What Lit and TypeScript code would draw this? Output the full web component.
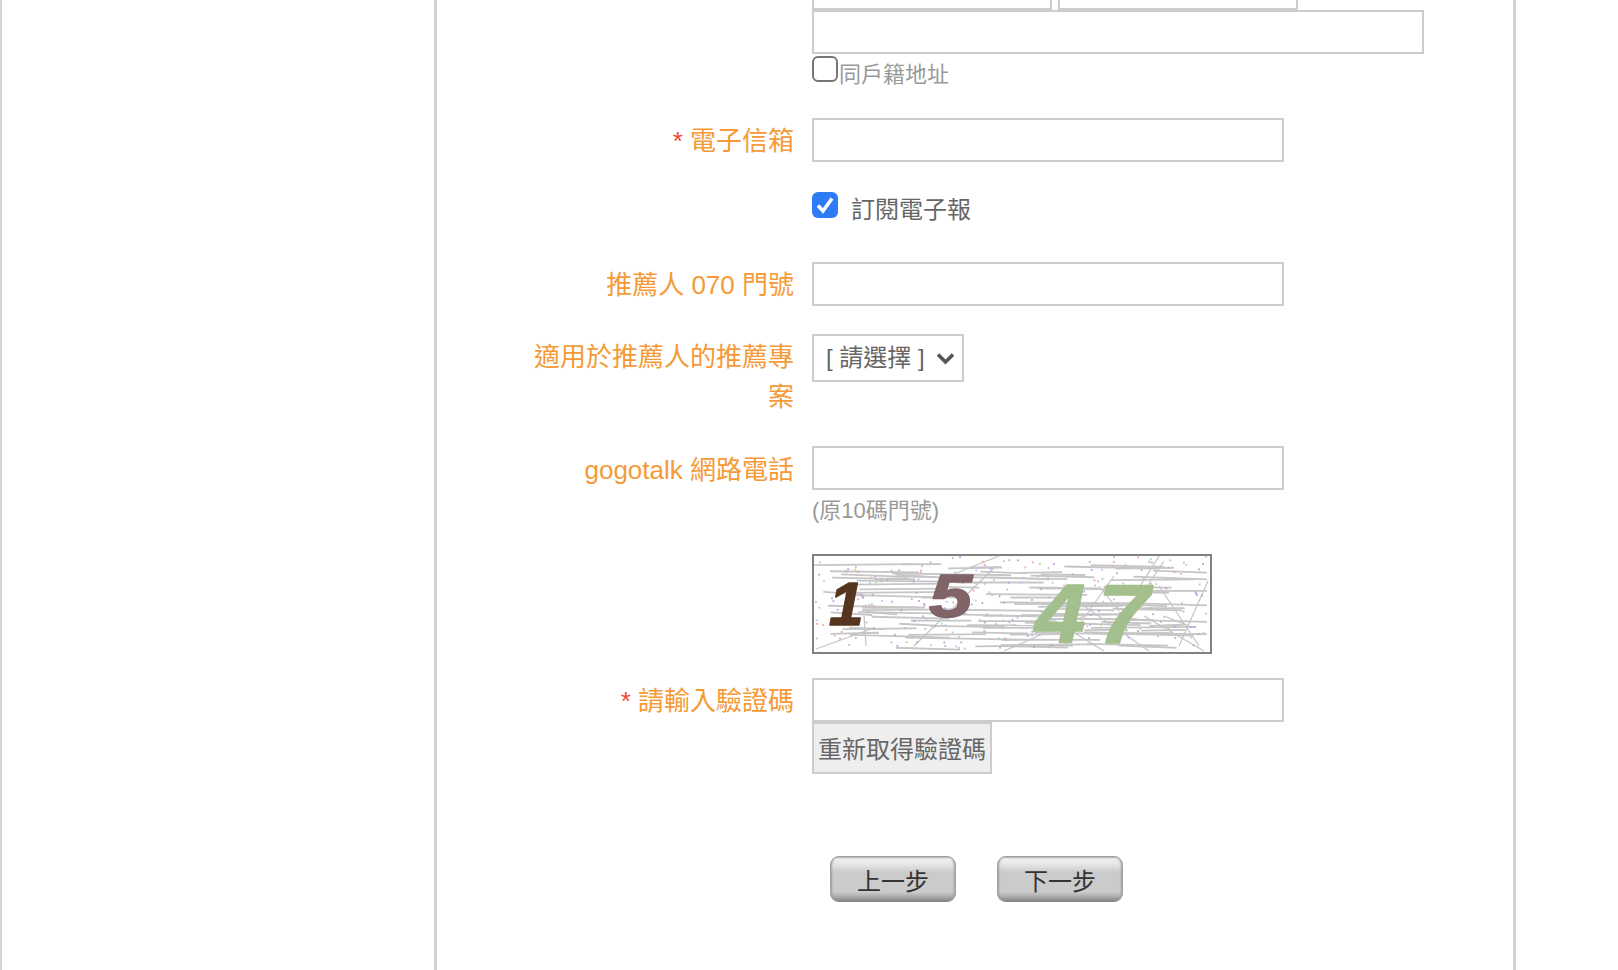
import { LitElement, html, css, svg } from "lit";
import { customElement } from "lit/decorators.js";

function rng(seed: number) {
  let s = seed;
  return () => {
    s = (s * 1664525 + 1013904223) % 4294967296;
    return s / 4294967296;
  };
}

const diagonals: number[][] = [
  [2, 93, 60, 72], [50, 60, 52, 90], [100, 90, 182, 10], [140, 18, 185, 0], [190, 95, 270, 60],
  [270, 50, 335, 95], [285, 30, 305, 55], [300, 20, 250, 90], [345, 30, 385, 90], [365, 90, 394, 25],
  [320, 40, 345, 0], [330, 60, 390, 95], [375, 70, 350, 60], [310, 65, 350, 5], [225, 55, 290, 95],
];

@customElement("app-root")
export class AppRoot extends LitElement {
  static styles = css`
    :host {
      display: block;
      width: 1618px;
      height: 970px;
      overflow: hidden;
      background: #fff;
      font-family: "Liberation Sans", "Noto Sans CJK TC", sans-serif;
    }
    .page { display: flex; height: 970px; }
    .side { width: 432px; flex: none; border-left: 2px solid #d6d6d6; }
    .main {
      width: 1082px;
      flex: none;
      box-sizing: border-box;
      border-left: 3px solid #d2d2d2;
      border-right: 3px solid #d2d2d2;
      padding-left: 83px;
    }
    .row { display: grid; grid-template-columns: 274px 1fr; column-gap: 18px; }
    .m-email { margin-top: 28px; }
    .m-news { margin-top: 28px; }
    .m-ref { margin-top: 37px; }
    .m-sel { margin-top: 28px; }
    .m-gogo { margin-top: 29px; }
    .m-cap { margin-top: 28px; }
    .m-verify { margin-top: 24px; }
    .label {
      text-align: right;
      font-size: 26px;
      line-height: 40px;
      color: #f59a36;
      padding-top: 3px;
    }
    .label.gogo { padding-top: 4px; }
    .req { color: #f0492b; }
    .field { display: flex; flex-direction: column; align-items: flex-start; }
    .clip { display: flex; gap: 6px; height: 10px; overflow: hidden; align-items: flex-end; }
    input.text {
      display: block;
      flex: none;
      box-sizing: border-box;
      height: 44px;
      margin: 0;
      padding: 0 8px;
      border: 2px solid #ccc;
      border-radius: 0;
      background: #fff;
      outline: none;
    }
    .w-half { width: 240px; }
    .w-mid { width: 472px; }
    .w-wide { width: 612px; }
    .checkrow { display: flex; align-items: flex-start; margin-top: 2px; }
    .box {
      width: 26px;
      height: 26px;
      flex: none;
      box-sizing: border-box;
      border-radius: 6px;
      display: block;
    }
    .box.off { border: 2px solid #767676; background: #fff; }
    .box.on { background: #2f7bf6; }
    .box svg { display: block; width: 26px; height: 26px; }
    .hint { font-size: 22px; line-height: 30px; color: #999; margin-top: 4px; margin-left: 1px; }
    .news { font-size: 24px; line-height: 30px; color: #666; margin-top: 3px; margin-left: 13px; }
    .note { font-size: 22px; line-height: 30px; color: #999; margin-top: 6px; }
    .selwrap { position: relative; width: 152px; height: 48px; }
    select {
      appearance: none;
      -webkit-appearance: none;
      display: block;
      width: 152px;
      height: 48px;
      box-sizing: border-box;
      margin: 0;
      padding: 0 0 2px 12px;
      border: 2px solid #ccc;
      border-radius: 0;
      background: #fff;
      color: #666;
      font: inherit;
      font-size: 24px;
    }
    .chev { position: absolute; left: 124px; top: 18px; width: 19px; height: 13px; pointer-events: none; }
    .captcha {
      display: block;
      width: 400px;
      height: 100px;
      box-sizing: border-box;
      border: 2px solid #808080;
      background: #fff;
    }
    .captcha svg { display: block; width: 396px; height: 96px; filter: blur(0.6px); overflow: visible; }
    .digit {
      font-family: "Liberation Sans", sans-serif;
      font-weight: 700;
      font-style: italic;
      stroke-linejoin: round;
    }
    .refresh {
      margin: 0;
      width: 180px;
      height: 52px;
      box-sizing: border-box;
      border: 2px solid #ccc;
      background: #eee;
      color: #666;
      font: inherit;
      font-size: 24px;
      padding: 0 0 2px;
      white-space: nowrap;
    }
    .actions { display: flex; gap: 41px; margin-top: 82px; margin-left: 310px; }
    .imgbtn {
      width: 126px;
      height: 46px;
      box-sizing: border-box;
      padding: 0;
      margin: 0;
      border: none;
      border-radius: 9px;
      font: inherit;
      font-size: 24px;
      color: #333;
      background: linear-gradient(#8c8c8c 0, #efefef 3px, #e4e4e4 9px, #cbcbcb 16px, #cbcbcb 36px, #a8a8a8 41px, #808080 46px);
      box-shadow: inset 3px 0 2px -1px #a0a0a0, inset -3px 0 2px -1px #a0a0a0;
    }
  `;

  private noise() {
    const r = rng(20240);
    const out: unknown[] = [];
    for (let i = 0; i < 100; i++) {
      const x = r() * 340;
      const y = 8 + r() * 84;
      const len = 30 + r() * 90;
      const dy = (r() - 0.3) * 4;
      const x2 = Math.min(x + len, 393);
      out.push(svg`<line x1=${x} y1=${y} x2=${x2} y2=${y + dy} stroke="#c6c6c6" stroke-width="1.8"/>`);
    }
    for (const [a, b, c, d] of diagonals) {
      out.push(svg`<line x1=${a} y1=${b} x2=${c} y2=${d} stroke="#c4c4c4" stroke-width="1.2"/>`);
    }
    const cols = ["#d9a8c8", "#a8a8e8", "#a8d8a8", "#e8b0a0", "#b8c8e8", "#c0a0d8"];
    for (let i = 0; i < 260; i++) {
      out.push(svg`<rect x=${r() * 392} y=${r() * 92} width="1.8" height="1.8" fill=${cols[i % 6]}/>`);
    }
    return out;
  }

  render() {
    const check = html`<svg viewBox="0 0 26 26"><path d="M6 13.5 L11 19 L20 6.5" fill="none" stroke="#fff" stroke-width="3.6" stroke-linejoin="miter"/></svg>`;
    return html`
      <div class="page">
        <div class="side"></div>
        <div class="main">
          <div class="row">
            <div></div>
            <div class="field">
              <div class="clip">
                <input class="text w-half" type="text" aria-label="縣市" />
                <input class="text w-half" type="text" aria-label="鄉鎮" />
              </div>
              <input class="text w-wide" type="text" aria-label="地址" />
              <div class="checkrow">
                <span class="box off"></span>
                <span class="hint">同戶籍地址</span>
              </div>
            </div>
          </div>

          <div class="row m-email">
            <div class="label"><span class="req">*</span> 電子信箱</div>
            <div class="field"><input class="text w-mid" type="text" aria-label="電子信箱" /></div>
          </div>

          <div class="row m-news">
            <div></div>
            <div class="field">
              <div class="checkrow">
                <span class="box on">${check}</span>
                <span class="news">訂閱電子報</span>
              </div>
            </div>
          </div>

          <div class="row m-ref">
            <div class="label">推薦人 070 門號</div>
            <div class="field"><input class="text w-mid" type="text" aria-label="推薦人 070 門號" /></div>
          </div>

          <div class="row m-sel">
            <div class="label">適用於推薦人的推薦專案</div>
            <div class="field">
              <div class="selwrap">
                <select aria-label="適用於推薦人的推薦專案"><option>[ 請選擇 ]</option></select>
                <svg class="chev" viewBox="0 0 19 13"><path d="M2 2.5 L9.5 10 L17 2.5" fill="none" stroke="#555" stroke-width="3.6"/></svg>
              </div>
            </div>
          </div>

          <div class="row m-gogo">
            <div class="label gogo">gogotalk 網路電話</div>
            <div class="field">
              <input class="text w-mid" type="text" aria-label="gogotalk 網路電話" />
              <div class="note">(原10碼門號)</div>
            </div>
          </div>

          <div class="row m-cap">
            <div></div>
            <div class="field">
              <div class="captcha">
                <svg viewBox="0 0 396 96">
                  ${this.noise()}
                  <text class="digit" transform="translate(15 69)" font-size="62" fill="#55351f" stroke="#55351f" stroke-width="1.5">1</text>
                  <text class="digit" transform="translate(115 61) scale(1.25 1)" font-size="62" fill="#806468" stroke="#806468" stroke-width="1.5">5</text>
                  <text class="digit" transform="translate(221 87) scale(1.08 1)" font-size="84" fill="#a3bf8d" stroke="#a3bf8d" stroke-width="1.5">4</text>
                  <text class="digit" transform="translate(284 87) scale(1.1 1)" font-size="84" fill="#a3bf8d" stroke="#a3bf8d" stroke-width="1.5">7</text>
                </svg>
              </div>
            </div>
          </div>

          <div class="row m-verify">
            <div class="label"><span class="req">*</span> 請輸入驗證碼</div>
            <div class="field">
              <input class="text w-mid" type="text" aria-label="請輸入驗證碼" />
              <button class="refresh">重新取得驗證碼</button>
            </div>
          </div>

          <div class="actions">
            <button class="imgbtn">上一步</button>
            <button class="imgbtn">下一步</button>
          </div>
        </div>
      </div>
    `;
  }
}
